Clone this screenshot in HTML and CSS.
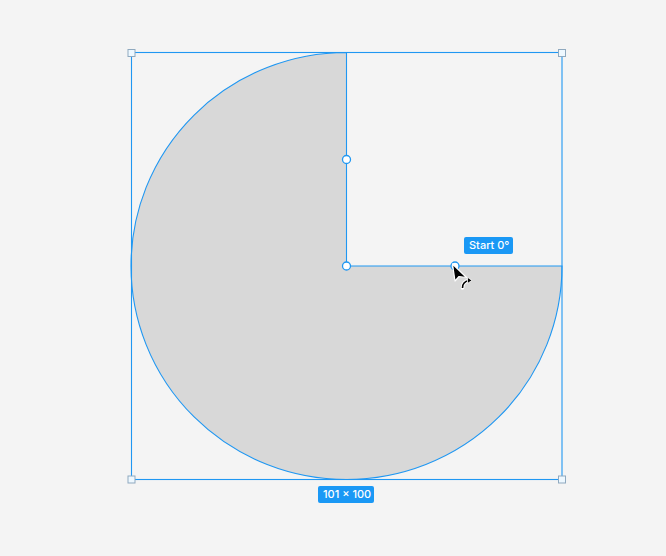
FILE: index.html
```html
<!DOCTYPE html>
<html>
<head>
<meta charset="utf-8">
<link rel="stylesheet" href="styles.css">
</head>
<body>
<div class="canvas">
  <svg class="art" width="666" height="556" viewBox="0 0 666 556">
    <path class="pie" d="M346.5,266 L562,266 A215.5,213.5 0 1 1 346.5,52.5 Z"/>
    <rect class="bbox" x="131.5" y="52.5" width="430.5" height="427"/>
    <rect class="corner" x="128" y="49.5" width="7" height="7"/>
    <rect class="corner" x="558.5" y="49.5" width="7" height="7"/>
    <rect class="corner" x="128" y="476" width="7" height="7"/>
    <rect class="corner" x="558.5" y="476" width="7" height="7"/>
    <circle class="knob" cx="346.5" cy="159.5" r="4"/>
    <circle class="knob" cx="346.5" cy="266" r="4"/>
    <circle class="knob" cx="455" cy="266" r="4"/>
    <g class="cursor">
      <path class="arrow" d="M452.5,264 L455,281 L459,276.5 L466.5,277.5 Z"/>
      <path class="curl-halo" d="M462.5,288 Q462.5,281.5 469,280.5"/>
      <path class="curl" d="M462.5,288 Q462.5,281.5 469,280.5"/>
      <path class="curlhead" d="M467.5,277.3 L472,280.4 L467.5,283.5 Z"/>
    </g>
  </svg>
  <div class="tag tag-start">Start 0°</div>
  <div class="tag tag-size">101 × 100</div>
</div>
</body>
</html>
```
FILE: styles.css
```css
html, body {
  margin: 0;
  padding: 0;
  background: #f4f4f4;
}
.canvas {
  position: relative;
  width: 666px;
  height: 556px;
  background: #f4f4f4;
  overflow: hidden;
  font-family: Inter, "Liberation Sans", sans-serif;
}
.art {
  position: absolute;
  left: 0;
  top: 0;
}
.pie {
  fill: #d8d8d8;
  stroke: #1f97f2;
  stroke-width: 1.1;
}
.bbox {
  fill: none;
  stroke: #1f97f2;
  stroke-width: 1.1;
}
.corner {
  fill: #eef8ff;
  stroke: #8fa9bf;
  stroke-width: 1;
}
.knob {
  fill: #ffffff;
  stroke: #1f97f2;
  stroke-width: 1.3;
}
.cursor .arrow {
  fill: #000;
  stroke: #fff;
  stroke-width: 1.2;
  stroke-linejoin: round;
}
.cursor .curl-halo {
  fill: none;
  stroke: #fff;
  stroke-width: 3.6;
  stroke-linecap: round;
}
.cursor .curl {
  fill: none;
  stroke: #000;
  stroke-width: 1.6;
}
.cursor .curlhead {
  fill: #000;
  stroke: #fff;
  stroke-width: 0.8;
}
.tag {
  position: absolute;
  height: 17px;
  line-height: 17px;
  padding: 0 5px;
  background: #1a98f5;
  color: #fff;
  font-size: 11px;
  font-weight: 500;
  border-radius: 2px;
  white-space: nowrap;
}
.tag-start {
  left: 464px;
  top: 237px;
  width: 39px;
}
.tag-size {
  left: 318px;
  top: 486px;
  width: 46px;
}
```
